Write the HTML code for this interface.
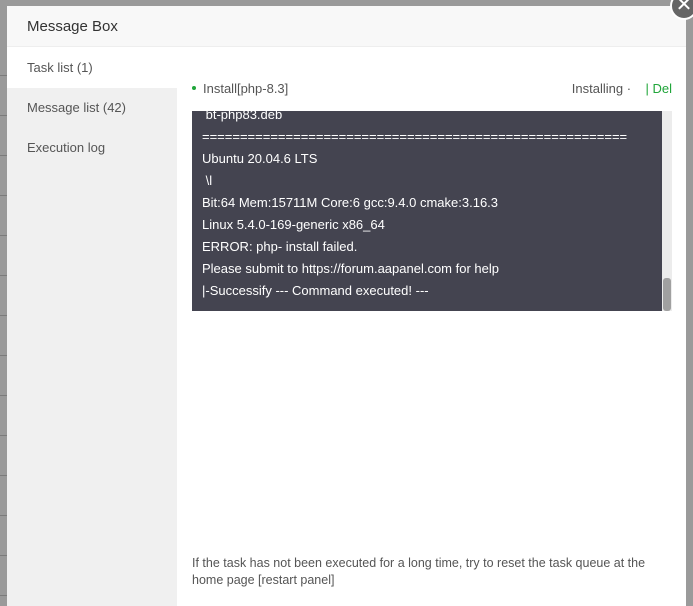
<!DOCTYPE html>
<html><head><style>
*{margin:0;padding:0;box-sizing:border-box}
body{width:693px;height:601px;overflow:hidden;background:#9a9a9a;position:relative;font-family:"Liberation Sans",sans-serif}
.ln{position:absolute;left:0;width:7px;height:1px;background:#7c7c7c}
.modal{position:absolute;left:7px;top:6px;width:679px;height:600px;background:#fff}
.hd{height:41px;background:#f8f8f8;border-bottom:1px solid #eee;font-size:15px;color:#333;padding-left:20px;line-height:41px}
.side{position:absolute;left:0;top:42px;width:170px;bottom:0;background:#f0f0f0}
.side div{height:40px;line-height:40px;padding-left:20px;font-size:13px;color:#555}
.side .on{background:#fff}
.tt{position:absolute;left:185px;top:75px;font-size:13px;color:#555}
.tt b{display:inline-block;width:4px;height:4px;border-radius:50%;background:#20a53a;margin-right:7px;vertical-align:middle;position:relative;top:-2px}
.st{position:absolute;right:14px;top:75px;font-size:13px;color:#555}
.term{position:absolute;left:185px;top:105px;width:480px;height:200px;background:#444450;color:#fff;font-size:13px;line-height:22px;padding-left:10px;overflow:hidden}
.sb{position:absolute;right:0;top:0;width:10px;height:200px;background:#ececec}
.sb i{position:absolute;left:1px;top:167px;width:8px;height:33px;background:#a0a0a0;border-radius:3px}
.foot{position:absolute;left:185px;top:549px;width:480px;font-size:12.5px;color:#555;line-height:17px}
.x{position:absolute;left:670px;top:-8px;width:28px;height:28px;border-radius:50%;background:#666;border:2px solid #fff;color:#fff;font-size:20px;line-height:22px;text-align:center}
</style></head><body>
<div class="ln" style="top:75px"></div><div class="ln" style="top:115px"></div><div class="ln" style="top:155px"></div><div class="ln" style="top:195px"></div><div class="ln" style="top:235px"></div><div class="ln" style="top:275px"></div><div class="ln" style="top:315px"></div><div class="ln" style="top:355px"></div><div class="ln" style="top:395px"></div><div class="ln" style="top:435px"></div><div class="ln" style="top:475px"></div><div class="ln" style="top:515px"></div><div class="ln" style="top:555px"></div>
<div class="ln" style="top:595px"></div>
<div class="modal">
<div class="hd">Message Box</div>
<div class="side"><div class="on">Task list (1)</div><div>Message list (42)</div><div>Execution log</div></div>
<div class="tt"><b></b>Install[php-8.3]</div>
<div class="st">Installing · &nbsp;&nbsp;&nbsp;<span style="color:#20a53a">| Del</span></div>
<div class="term">
<div style="margin-top:-7px">&nbsp;bt-php83.deb</div>
<div>========================================================</div>
<div>Ubuntu 20.04.6 LTS</div>
<div>&nbsp;\l</div>
<div>Bit:64 Mem:15711M Core:6 gcc:9.4.0 cmake:3.16.3</div>
<div>Linux 5.4.0-169-generic x86_64</div>
<div>ERROR: php- install failed.</div>
<div>Please submit to https://forum.aapanel.com for help</div>
<div>|-Successify --- Command executed! ---</div>
<div class="sb"><i></i></div>
</div>
<div class="foot">If the task has not been executed for a long time, try to reset the task queue at the home page [restart panel]</div>
</div>
<div class="x">✕</div>
</body></html>
